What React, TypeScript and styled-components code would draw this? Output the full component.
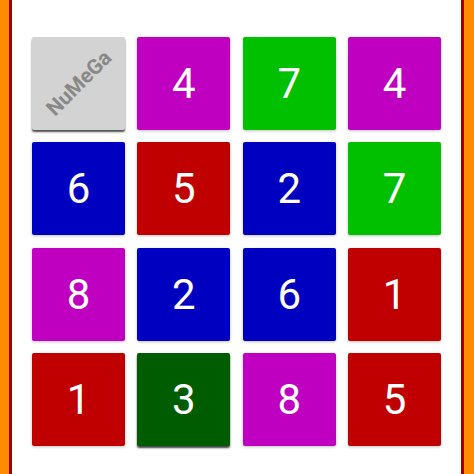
import styled, { createGlobalStyle } from 'styled-components';

const GlobalStyle = createGlobalStyle`
  html, body {
    margin: 0;
    padding: 0;
  }
  body {
    font-family: Roboto, "Liberation Sans", sans-serif;
  }
`;

type TileColor = 'purple' | 'green' | 'blue' | 'red' | 'darkgreen';

const palette: Record<TileColor, string> = {
  purple: '#c000c0',
  green: '#00c000',
  blue: '#0000c0',
  red: '#c00000',
  darkgreen: '#005c00',
};

type Cell = { value: number; color: TileColor; raised?: boolean };

const cells: Cell[] = [
  { value: 4, color: 'purple' },
  { value: 7, color: 'green' },
  { value: 4, color: 'purple' },
  { value: 6, color: 'blue' },
  { value: 5, color: 'red' },
  { value: 2, color: 'blue' },
  { value: 7, color: 'green' },
  { value: 8, color: 'purple' },
  { value: 2, color: 'blue' },
  { value: 6, color: 'blue' },
  { value: 1, color: 'red' },
  { value: 1, color: 'red' },
  { value: 3, color: 'darkgreen', raised: true },
  { value: 8, color: 'purple' },
  { value: 5, color: 'red' },
];

const App = () => {
  return (
    <>
      <GlobalStyle />
      <S.Frame>
        <S.Board>
          <S.Grid>
            <S.LogoTile>
              <S.Logo>NuMeGa</S.Logo>
            </S.LogoTile>
            {cells.map((cell, index) => (
              <S.Tile key={index} $bg={palette[cell.color]} $raised={cell.raised}>
                {cell.value}
              </S.Tile>
            ))}
          </S.Grid>
        </S.Board>
      </S.Frame>
    </>
  );
};

const S = {
  Frame: styled.div`
    min-height: 100vh;
    background-color: #ff8c00;
    padding: 0 10px 0 9px;
    box-sizing: border-box;
    display: flex;
  `,
  Board: styled.div`
    flex: 1;
    background-color: #ffffff;
    border-left: 3px solid #a00000;
    border-right: 3px solid #a00000;
    padding: 37px 20px 28px 20px;
  `,
  Grid: styled.div`
    display: grid;
    grid-template-columns: repeat(4, 1fr);
    gap: 12.5px;
  `,
  Tile: styled.div<{ $bg: string; $raised?: boolean }>`
    aspect-ratio: 1;
    background-color: ${(p) => p.$bg};
    border-radius: 2px;
    box-shadow: ${(p) =>
      p.$raised
        ? '0 2px 2px rgba(0, 0, 0, 0.75)'
        : '0 1px 3px rgba(0, 0, 0, 0.25)'};
    display: flex;
    align-items: center;
    justify-content: center;
    color: #ffffff;
    font-size: 42px;
    font-weight: 400;
  `,
  LogoTile: styled.div`
    aspect-ratio: 1;
    background-color: #d3d3d3;
    border-radius: 2px;
    box-shadow: 0 2px 2px rgba(0, 0, 0, 0.7);
    display: flex;
    align-items: center;
    justify-content: center;
    overflow: hidden;
  `,
  Logo: styled.span`
    transform: rotate(-45deg);
    color: #888888;
    font-size: 21px;
    font-weight: 700;
  `,
};

export default App;
